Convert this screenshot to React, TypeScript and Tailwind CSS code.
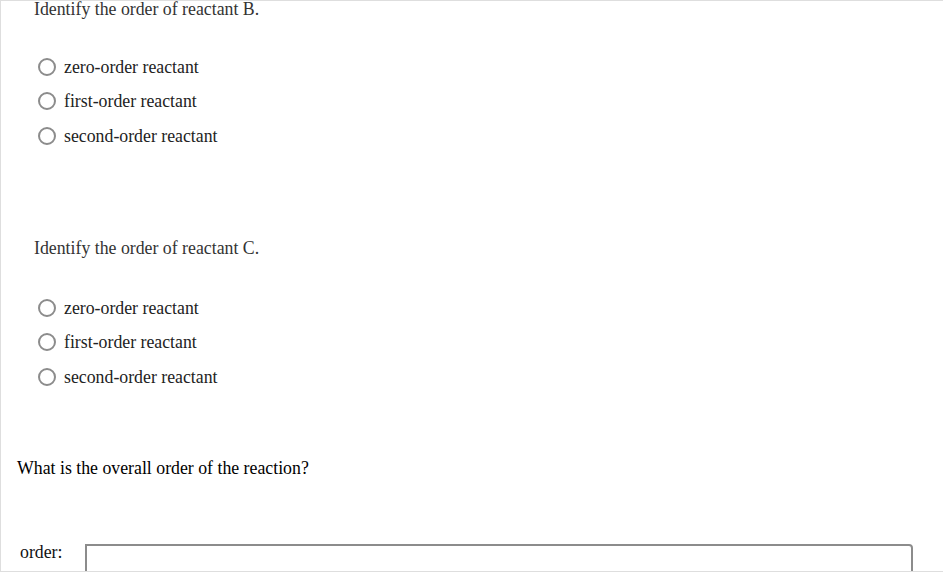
const serif = "font-['Liberation_Serif','Times_New_Roman',serif]";

function Radio({ label }: { label: string }) {
  return (
    <label className="flex h-[34.5px] items-center">
      <span className="ml-[37px] h-[18px] w-[18px] rounded-full border-2 border-[#8c8c8c] bg-white"></span>
      <span className="ml-[8px] text-[17.8px] leading-5 text-[#222]">{label}</span>
    </label>
  );
}

function Options() {
  return (
    <div>
      <Radio label="zero-order reactant" />
      <Radio label="first-order reactant" />
      <Radio label="second-order reactant" />
    </div>
  );
}

export default function App() {
  return (
    <div className={`${serif} h-[572px] w-[943px] overflow-hidden border-t border-b border-l border-[#dedede] bg-white`}>
      <div className="-mt-[2px] pl-[33px] text-[17.8px] leading-5 text-[#333]">Identify the order of reactant B.</div>
      <div className="mt-[30.5px]">
        <Options />
      </div>

      <div className="mt-[84.5px] pl-[33px] text-[17.8px] leading-5 text-[#333]">Identify the order of reactant C.</div>
      <div className="mt-[33px]">
        <Options />
      </div>

      <div className="mt-[64px] pl-[16px] text-[17.8px] leading-5 text-black">What is the overall order of the reaction?</div>

      <div className="mt-[64px] flex items-start">
        <span className="ml-[19px] text-[17.8px] leading-5 text-[#111]">order:</span>
        <input
          type="text"
          className="ml-[23px] mt-[2px] h-[40px] w-[828px] rounded-tr-[4px] border-2 border-[#8c8c8c] bg-white outline-none"
        />
      </div>
    </div>
  );
}
